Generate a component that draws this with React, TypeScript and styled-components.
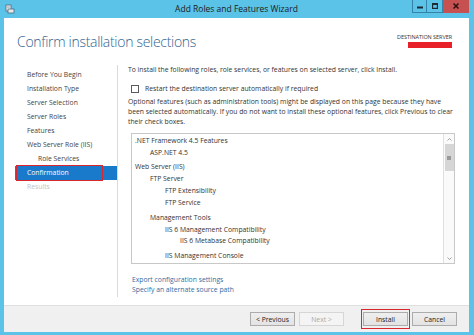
import React from 'react';
import styled, { createGlobalStyle } from 'styled-components';

const GlobalStyle = createGlobalStyle`
  html, body {
    margin: 0;
    padding: 0;
    background: #5bc3e8;
  }
  body {
    font-family: "Open Sans", "Liberation Sans", sans-serif;
    color: #333;
  }
`;

const Window = styled.div`
  width: 474px;
  height: 335px;
  box-sizing: border-box;
  background: #5bc3e8;
  padding: 0 5px 3px 4px;
  display: flex;
  flex-direction: column;
  overflow: hidden;
`;

const TitleBar = styled.div`
  height: 18px;
  flex: none;
  display: grid;
  grid-template-columns: 1fr auto 1fr;
  align-items: start;
`;

const AppIcon = styled.svg`
  margin: 4px 0 0 1px;
  width: 10px;
  height: 10px;
`;

const TitleText = styled.div`
  font-size: 8.5px;
  line-height: 18px;
  color: #1b1b1b;
  white-space: nowrap;
`;

const Controls = styled.div`
  justify-self: end;
  display: flex;
  height: 13px;
`;

const CtrlButton = styled.div<{ $w: number; $close?: boolean }>`
  width: ${(p) => p.$w}px;
  height: 13px;
  box-sizing: border-box;
  display: flex;
  align-items: center;
  justify-content: center;
  background: ${(p) => (p.$close ? '#c75050' : '#5bc3e8')};
  border: 1px solid ${(p) => (p.$close ? '#c75050' : '#3484aa')};
  border-top: none;
  & + & {
    border-left: none;
  }
`;

const Body = styled.div`
  flex: 1;
  background: #fff;
  display: flex;
  flex-direction: column;
  min-height: 0;
`;

const Header = styled.div`
  height: 47px;
  flex: none;
  display: flex;
  justify-content: space-between;
  align-items: flex-start;
  padding: 0 17px 0 13px;
`;

const Heading = styled.h1`
  margin: 15px 0 0;
  font-size: 14px;
  line-height: 18px;
  font-weight: 300;
  letter-spacing: -0.3px;
  color: #2f6390;
  white-space: nowrap;
`;

const Destination = styled.div`
  margin-top: 16px;
  display: flex;
  flex-direction: column;
  align-items: flex-end;
  gap: 2px;
`;

const DestLabel = styled.div`
  font-size: 5.5px;
  line-height: 6px;
  color: #333;
  letter-spacing: -0.05px;
`;

const RedBar = styled.div`
  width: 44px;
  height: 6px;
  background: #e8202a;
`;

const Main = styled.div`
  flex: 1;
  display: flex;
  min-height: 0;
  padding-bottom: 8px;
`;

const Sidebar = styled.nav`
  width: 114px;
  flex: none;
  box-sizing: border-box;
  border-right: 1px solid #dadada;
  padding: 3px 0 0 11px;
  display: flex;
  flex-direction: column;
`;

const NavItem = styled.div<{ $indent?: boolean; $active?: boolean; $disabled?: boolean }>`
  position: relative;
  height: 14px;
  line-height: 14px;
  font-size: 6.8px;
  padding-left: ${(p) => (p.$indent ? 23 : 12)}px;
  color: ${(p) => (p.$active ? '#fff' : p.$disabled ? '#c4c4c4' : '#444')};
  background: ${(p) => (p.$active ? '#1979ca' : 'transparent')};
  white-space: nowrap;
`;

const NavMark = styled.span`
  position: absolute;
  left: 1px;
  top: -1px;
  width: 87px;
  height: 16px;
  box-sizing: border-box;
  border: 1.5px solid #d9262f;
`;

const Content = styled.div`
  flex: 1;
  padding: 0 12px 0 10px;
  display: flex;
  flex-direction: column;
  font-size: 6.8px;
  color: #333;
`;

const Intro = styled.p`
  margin: 0;
  line-height: 10px;
`;

const CheckRow = styled.label`
  margin: 9px 0 0 3px;
  display: flex;
  align-items: center;
  gap: 6px;
  line-height: 10px;
`;

const CheckBox = styled.span`
  width: 8px;
  height: 8px;
  box-sizing: border-box;
  border: 1px solid #5a5a5a;
  background: #fff;
`;

const Note = styled.p`
  margin: 3px 0 0;
  line-height: 10px;
  white-space: nowrap;
`;

const ListBox = styled.div`
  margin: 6px 2px 0 3px;
  height: 131px;
  box-sizing: border-box;
  border: 1px solid #c8c8c8;
  display: flex;
`;

const ListItems = styled.div`
  flex: 1;
  padding: 1px 0 0 3px;
  display: flex;
  flex-direction: column;
`;

const ListItem = styled.div<{ $level: number; $gap: number }>`
  height: 12px;
  line-height: 12px;
  margin-top: ${(p) => p.$gap}px;
  padding-left: ${(p) => p.$level * 15}px;
  color: #333;
  white-space: nowrap;
`;

const Scrollbar = styled.div`
  width: 10px;
  flex: none;
  border-left: 1px solid #e0e0e0;
  background: #fafafa;
  display: flex;
  flex-direction: column;
  align-items: center;
`;

const Arrow = styled.div`
  height: 10px;
  display: flex;
  align-items: center;
  justify-content: center;
`;

const Thumb = styled.div`
  width: 9px;
  height: 27px;
  background: #d6d6d6;
  display: flex;
  align-items: center;
  justify-content: center;
  &::after {
    content: '';
    width: 4px;
    height: 4px;
    background: #9a9a9a;
  }
`;

const Track = styled.div`
  flex: 1;
`;

const Links = styled.div`
  margin: 11px 0 0 4px;
  display: flex;
  flex-direction: column;
`;

const LinkText = styled.a`
  line-height: 9.5px;
  color: #2e6ea4;
  text-decoration: none;
  cursor: pointer;
`;

const Footer = styled.div`
  height: 27px;
  flex: none;
  box-sizing: border-box;
  background: #f0f0f0;
  border-top: 1px solid #dfdfdf;
  display: flex;
  align-items: center;
  justify-content: flex-end;
  padding-right: 12px;
`;

const Button = styled.button<{ $disabled?: boolean }>`
  width: 45px;
  height: 14px;
  padding: 0;
  box-sizing: border-box;
  font-family: inherit;
  font-size: 6.8px;
  color: ${(p) => (p.$disabled ? '#a8a8a8' : '#222')};
  background: ${(p) => (p.$disabled ? '#f4f4f4' : 'linear-gradient(#efefef, #e3e3e3)')};
  border: 1px solid ${(p) => (p.$disabled ? '#d6d6d6' : '#acacac')};
  margin-left: 4px;
`;

const MarkBox = styled.div`
  margin-left: 17px;
  display: flex;
  padding: 2px 1px;
  border: 1.5px solid #d9262f;
  & > ${Button} {
    margin-left: 0;
  }
  & + ${Button} {
    margin-left: 2px;
  }
`;

const features: { label: string; level: number; gap: number }[] = [
  { label: '.NET Framework 4.5 Features', level: 0, gap: 0 },
  { label: 'ASP.NET 4.5', level: 1, gap: 0 },
  { label: 'Web Server (IIS)', level: 0, gap: 2 },
  { label: 'FTP Server', level: 1, gap: 0 },
  { label: 'FTP Extensibility', level: 2, gap: 0 },
  { label: 'FTP Service', level: 2, gap: 0 },
  { label: 'Management Tools', level: 1, gap: 3 },
  { label: 'IIS 6 Management Compatibility', level: 2, gap: 0 },
  { label: 'IIS 6 Metabase Compatibility', level: 3, gap: -1 },
  { label: 'IIS Management Console', level: 2, gap: 3 },
];

const steps = [
  { label: 'Before You Begin' },
  { label: 'Installation Type' },
  { label: 'Server Selection' },
  { label: 'Server Roles' },
  { label: 'Features' },
  { label: 'Web Server Role (IIS)' },
  { label: 'Role Services', indent: true },
  { label: 'Confirmation', active: true },
  { label: 'Results', disabled: true },
];

const App: React.FC = () => {
  return (
    <>
      <GlobalStyle />
      <Window>
        <TitleBar>
          <AppIcon viewBox="0 0 10 10">
            <rect x="1" y="1" width="5" height="6" fill="#f4f4f4" stroke="#4a6a80" strokeWidth="0.8" />
            <rect x="3" y="5" width="6" height="4" fill="#e8e8e8" stroke="#4a6a80" strokeWidth="0.8" />
            <line x1="2" y1="3" x2="5" y2="3" stroke="#4a6a80" strokeWidth="0.6" />
          </AppIcon>
          <TitleText>Add Roles and Features Wizard</TitleText>
          <Controls>
            <CtrlButton $w={15}>
              <svg width="6" height="6" viewBox="0 0 6 6">
                <rect x="0" y="3.5" width="6" height="2" fill="#1b2a33" />
              </svg>
            </CtrlButton>
            <CtrlButton $w={16}>
              <svg width="6" height="6" viewBox="0 0 6 6">
                <rect x="0.6" y="0.6" width="4.8" height="4.8" fill="none" stroke="#1b2a33" strokeWidth="1.2" />
                <rect x="0" y="0" width="6" height="2" fill="#1b2a33" />
              </svg>
            </CtrlButton>
            <CtrlButton $w={26} $close>
              <svg width="6" height="6" viewBox="0 0 6 6">
                <path d="M0.5 0.5 L5.5 5.5 M5.5 0.5 L0.5 5.5" stroke="#2a1111" strokeWidth="1.5" />
              </svg>
            </CtrlButton>
          </Controls>
        </TitleBar>
        <Body>
          <Header>
            <Heading>Confirm installation selections</Heading>
            <Destination>
              <DestLabel>DESTINATION SERVER</DestLabel>
              <RedBar />
            </Destination>
          </Header>
          <Main>
            <Sidebar>
              {steps.map((s) => (
                <NavItem key={s.label} $indent={s.indent} $active={s.active} $disabled={s.disabled}>
                  {s.label}
                  {s.active && <NavMark />}
                </NavItem>
              ))}
            </Sidebar>
            <Content>
              <Intro>
                To install the following roles, role services, or features on selected server, click Install.
              </Intro>
              <CheckRow>
                <CheckBox />
                Restart the destination server automatically if required
              </CheckRow>
              <Note>
                Optional features (such as administration tools) might be displayed on this page because they have
                <br />
                been selected automatically. If you do not want to install these optional features, click Previous to clear
                <br />
                their check boxes.
              </Note>
              <ListBox>
                <ListItems>
                  {features.map((f) => (
                    <ListItem key={f.label} $level={f.level} $gap={f.gap}>
                      {f.label}
                    </ListItem>
                  ))}
                </ListItems>
                <Scrollbar>
                  <Arrow>
                    <svg width="5" height="3" viewBox="0 0 5 3">
                      <path d="M0.5 2.5 L2.5 0.5 L4.5 2.5" fill="none" stroke="#8a8a8a" strokeWidth="0.8" />
                    </svg>
                  </Arrow>
                  <Thumb />
                  <Track />
                  <Arrow>
                    <svg width="5" height="3" viewBox="0 0 5 3">
                      <path d="M0.5 0.5 L2.5 2.5 L4.5 0.5" fill="none" stroke="#8a8a8a" strokeWidth="0.8" />
                    </svg>
                  </Arrow>
                </Scrollbar>
              </ListBox>
              <Links>
                <LinkText>Export configuration settings</LinkText>
                <LinkText>Specify an alternate source path</LinkText>
              </Links>
            </Content>
          </Main>
          <Footer>
            <Button>&lt; Previous</Button>
            <Button $disabled>Next &gt;</Button>
            <MarkBox>
              <Button>Install</Button>
            </MarkBox>
            <Button>Cancel</Button>
          </Footer>
        </Body>
      </Window>
    </>
  );
};

export default App;
